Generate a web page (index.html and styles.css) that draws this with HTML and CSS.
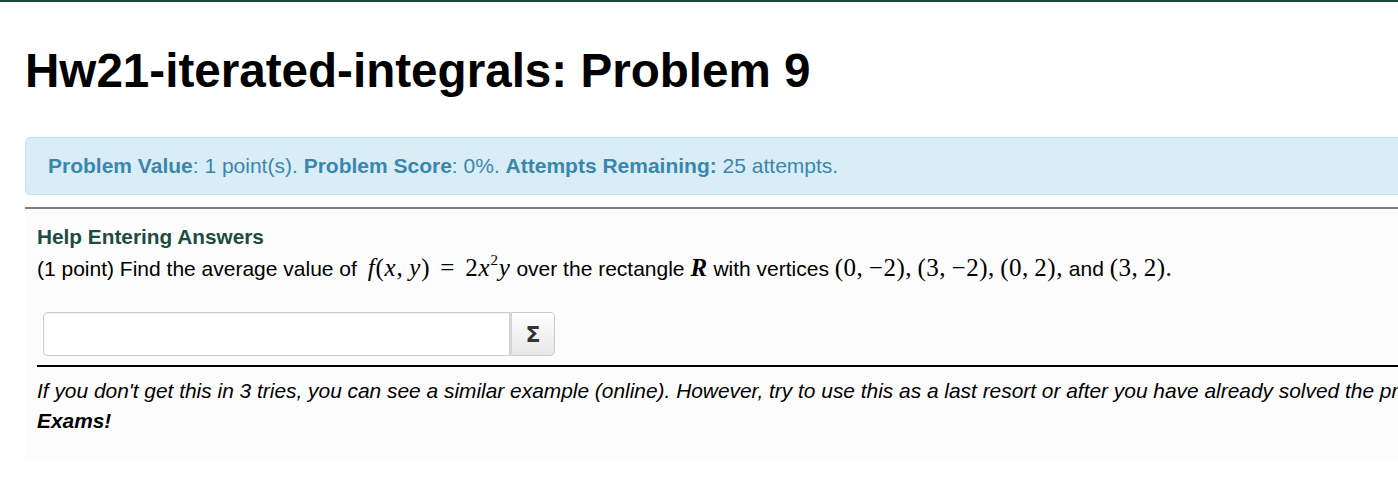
FILE: index.html
```html
<!DOCTYPE html>
<html lang="en">
<head>
<meta charset="utf-8">
<title>Hw21-iterated-integrals: Problem 9</title>
<link rel="stylesheet" href="styles.css">
</head>
<body>
<div class="topbar"></div>
<main class="page">
  <h1 class="title">Hw21-iterated-integrals: Problem 9</h1>
  <div class="alert"><strong>Problem Value</strong>: 1 point(s). <strong>Problem Score</strong>: 0%. <strong>Attempts Remaining:</strong> 25 attempts.</div>
  <div class="rule"></div>
  <section class="problem">
    <a class="help">Help Entering Answers</a>
    <p class="statement">(1 point) Find the average value of <span class="math formula"><i>f</i>(<i>x</i>,&#8201;<i>y</i>)&#8202; = &#8202;2<i>x</i><span class="sup">2</span><i>y</i></span> over the rectangle <span class="math"><b><i>R</i></b></span> with vertices <span class="math">(0,&#8201;−2),&#8201;(3,&#8201;−2),&#8201;(0,&#8201;2),</span> and <span class="math">(3,&#8201;2).</span></p>
    <div class="answer">
      <input class="answer-input" type="text">
      <button class="answer-btn" type="button">Σ</button>
    </div>
    <div class="black-rule"></div>
    <p class="hint"><em class="hint-line">If you don't get this in 3 tries, you can see a similar example (online). However, try to use this as a last resort or after you have already solved the problem. There are no See Similar Examples on</em><br><strong><em>Exams!</em></strong></p>
  </section>
</main>
</body>
</html>
```
FILE: styles.css
```css
html, body {
  margin: 0;
  padding: 0;
  background: #fff;
  overflow: hidden;
}
body {
  font-family: "Liberation Sans", Arial, Helvetica, sans-serif;
  color: #000;
  width: 1398px;
  height: 478px;
}
.topbar {
  height: 2px;
  background: #1d4a40;
}
.page {
  width: 1600px;
  padding-left: 25px;
}
.title {
  margin: 43px 0 0 0;
  font-size: 47.6px;
  line-height: 52.4px;
  font-weight: bold;
}
.alert {
  margin-top: 40px;
  background: #d9edf7;
  border: 1px solid #bce8f1;
  border-radius: 5px;
  padding: 17px 22px;
  font-size: 21px;
  line-height: 22px;
  color: #3a87ad;
}
.alert strong {
  font-weight: bold;
}
.rule {
  margin-top: 12px;
  height: 2px;
  background: #7f7f7f;
}
.problem {
  background: #fcfcfc;
  padding: 15px 0 0 12px;
  height: 235px;
}
.help {
  display: block;
  font-size: 20.8px;
  line-height: 25px;
  font-weight: bold;
  color: #1c4d42;
}
.statement {
  margin: 5.4px 0 0 0;
  font-size: 21px;
  line-height: 28px;
}
.math {
  font-family: "Liberation Serif", "Times New Roman", serif;
  font-size: 25px;
  line-height: 0;
  letter-spacing: 0.5px;
}
.formula {
  margin-left: 5px;
  letter-spacing: 0.8px;
}
.sup {
  font-size: 15px;
  vertical-align: 11px;
  line-height: 0;
}
.answer {
  display: flex;
  margin: 29.3px 0 0 6px;
  height: 44px;
}
.answer-input {
  box-sizing: border-box;
  width: 469px;
  height: 44px;
  margin: 0;
  border: 1px solid #cccccc;
  border-right: 3px solid #d4d4d4;
  border-radius: 5px 0 0 5px;
  background: #fff;
  box-shadow: inset 0 1px 1px rgba(0,0,0,0.06);
}
.answer-btn {
  box-sizing: border-box;
  width: 43px;
  height: 44px;
  margin: 0;
  border: 1px solid #cccccc;
  border-left: none;
  border-radius: 0 5px 5px 0;
  background: linear-gradient(#ffffff, #e6e6e6);
  font-family: "DejaVu Sans", "Liberation Sans", sans-serif;
  font-weight: bold;
  font-size: 22px;
  color: #333;
  padding: 0;
}
.black-rule {
  margin-top: 9px;
  height: 2px;
  background: #000;
}
.hint {
  margin: 9px 0 0 0;
  font-size: 20.9px;
  line-height: 30px;
  white-space: nowrap;
}
.hint strong {
  font-weight: bold;
}
```
